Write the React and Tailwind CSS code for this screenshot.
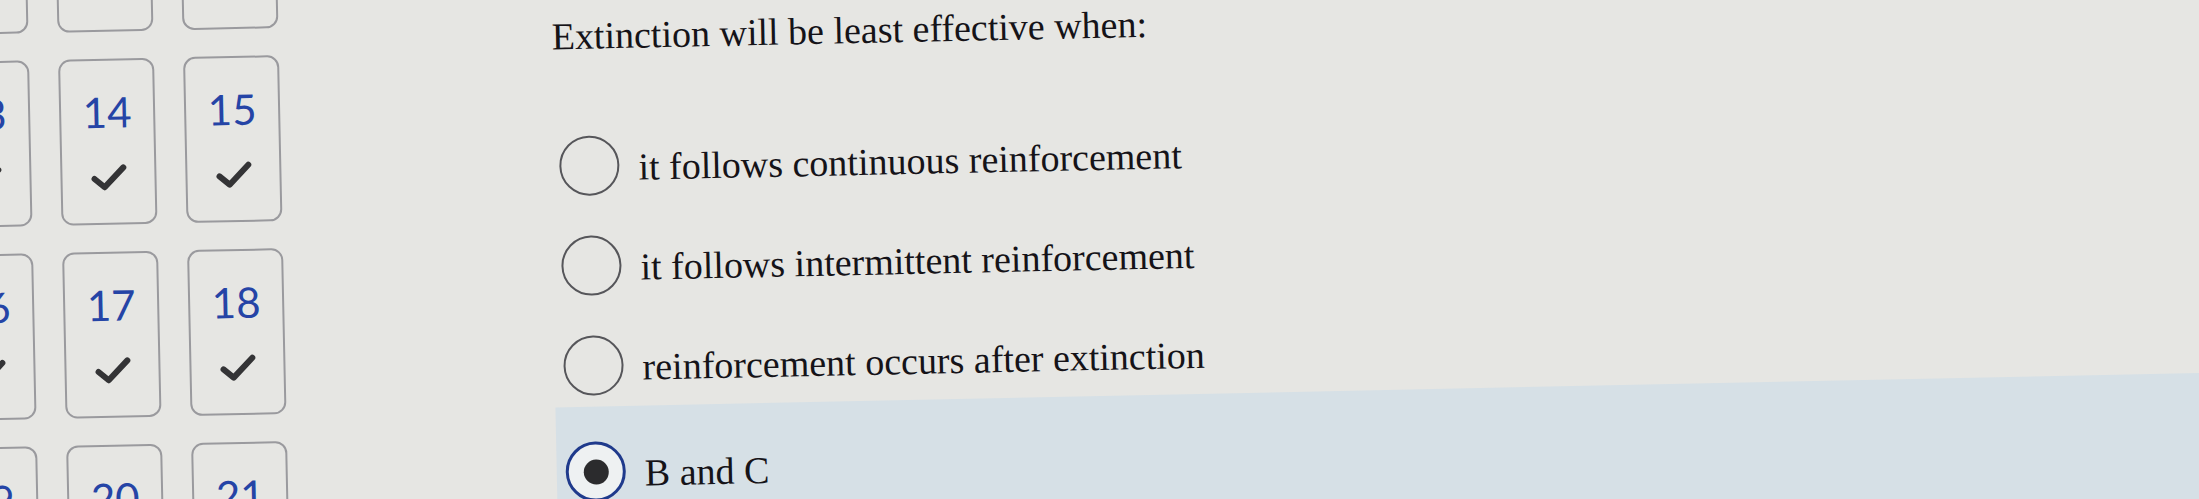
import React from 'react';

const questions = [
  [10, 11, 12],
  [13, 14, 15],
  [16, 17, 18],
  [19, 20, 21],
];

const choices = [
  'it follows continuous reinforcement',
  'it follows intermittent reinforcement',
  'reinforcement occurs after extinction',
];

function Check() {
  return (
    <svg width="40" height="30" viewBox="0 0 40 30" className="mt-[30px]">
      <path
        d="M6 16 L16 24.5 L35 5"
        fill="none"
        stroke="#343436"
        strokeWidth="6"
        strokeLinecap="round"
        strokeLinejoin="round"
      />
    </svg>
  );
}

function QuestionTile({ n }) {
  return (
    <div className="w-[96px] h-[166px] rounded-[12px] border-2 border-[#9a9a9e] flex flex-col items-center pt-[30px]">
      <span className="font-['Lato',sans-serif] text-[42px] leading-none text-[#2544a6]">{n}</span>
      <Check />
    </div>
  );
}

function Radio({ selected }) {
  if (selected) {
    return (
      <span className="w-[60px] h-[60px] shrink-0 rounded-full border-[3px] border-[#1f3a8c] bg-[#eef1f2] flex items-center justify-center">
        <span className="w-[25px] h-[25px] rounded-full bg-[#2b2b2d]" />
      </span>
    );
  }
  return <span className="w-[60px] h-[60px] shrink-0 rounded-full border-2 border-[#56565a]" />;
}

function Choice({ label, selected }) {
  return (
    <label className="flex items-center gap-[19px] h-[60px]">
      <Radio selected={selected} />
      <span className="pt-[3px] text-[38px] leading-none text-[#151318] whitespace-nowrap">{label}</span>
    </label>
  );
}

export default function App() {
  return (
    <div className="relative w-[2199px] h-[499px] overflow-hidden bg-[#e6e6e3] font-['Liberation_Serif',serif]">
      <div className="flex w-[2400px] h-[720px] rotate-[-1.2deg] origin-[0_250px]">
        {/* question navigator */}
        <aside className="w-[552px] shrink-0">
          <div className="-ml-[63px] -mt-[132px] grid grid-cols-[repeat(3,96px)] gap-x-[29px] gap-y-[27px]">
            {questions.flat().map((n) => (
              <QuestionTile key={n} n={n} />
            ))}
          </div>
        </aside>

        {/* question body */}
        <main className="flex-1 flex flex-col">
          <h2 className="pt-[29px] pl-[4px] text-[38px] leading-none font-normal text-[#151318] whitespace-nowrap">
            Extinction will be least effective when:
          </h2>
          <div className="mt-[81px] pl-[9px] flex flex-col gap-[40px]">
            {choices.map((c) => (
              <Choice key={c} label={c} />
            ))}
          </div>
          <div className="mt-[11px] flex-1 bg-[#d6e0e6] pt-[35px] pl-[9px]">
            <Choice label="B and C" selected />
          </div>
        </main>
      </div>
    </div>
  );
}
